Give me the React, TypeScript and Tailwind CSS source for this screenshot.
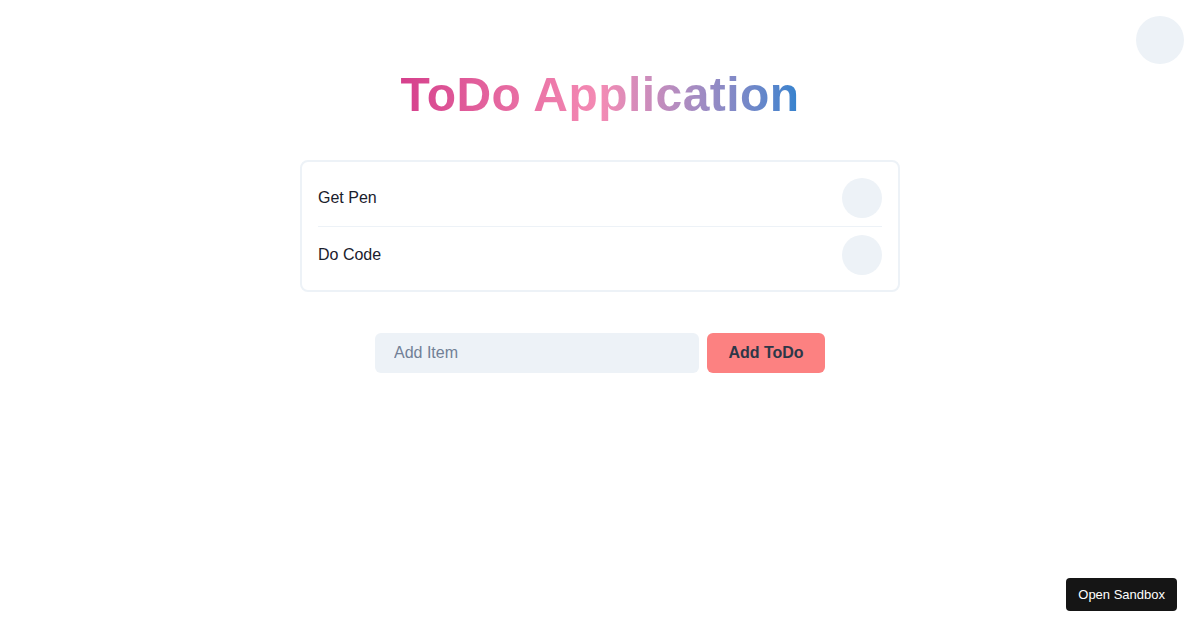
import { Fragment, useState, type FC } from "react";

type Todo = { id: number; body: string };

const initialTodos: Todo[] = [
  { id: 1, body: "Get Pen" },
  { id: 2, body: "Do Code" },
];

const TodoList: FC<{ todos: Todo[]; onDelete: (id: number) => void }> = ({ todos, onDelete }) => (
  <div className="flex w-[600px] flex-col rounded-lg border-2 border-[#edf2f7] px-4 pt-2 pb-[7px]">
    {todos.map((todo, i) => (
      <Fragment key={todo.id}>
        {i > 0 && <div className="h-px bg-[#edf2f7]" />}
        <div className="flex h-14 items-center justify-between">
          <p className="text-base text-[#1a202c]">{todo.body}</p>
          <button
            aria-label="Delete"
            onClick={() => onDelete(todo.id)}
            className="h-10 w-10 rounded-full bg-[#edf2f7]"
          />
        </div>
      </Fragment>
    ))}
  </div>
);

export default function App() {
  const [todos, setTodos] = useState<Todo[]>(initialTodos);
  const [value, setValue] = useState("");

  const addTodo = () => {
    if (!value.trim()) return;
    setTodos((t) => [...t, { id: Date.now(), body: value }]);
    setValue("");
  };

  return (
    <div className="flex min-h-screen flex-col items-center bg-white p-4 font-['Liberation_Sans',Arial,sans-serif]">
      <button aria-label="Toggle color mode" className="h-12 w-12 self-end rounded-full bg-[#edf2f7]" />

      <h1 className="mt-0.5 bg-gradient-to-r from-[#d53f8c] via-[#f48bb4] to-[#3182ce] bg-clip-text text-5xl leading-[1.2] font-extrabold tracking-[0.45px] text-transparent">
        ToDo Application
      </h1>

      <div className="mt-9">
        <TodoList todos={todos} onDelete={(id) => setTodos((t) => t.filter((x) => x.id !== id))} />
      </div>

      <form
        className="mt-[41px] flex gap-2"
        onSubmit={(e) => {
          e.preventDefault();
          addTodo();
        }}
      >
        <input
          value={value}
          onChange={(e) => setValue(e.target.value)}
          placeholder="Add Item"
          className="h-10 w-[324px] rounded-md border border-transparent bg-[#edf2f7] px-[18px] pt-px text-base text-[#1a202c] outline-none placeholder:text-[#718096]"
        />
        <button type="submit" className="h-10 w-[118px] rounded-md bg-[#fc8181] pt-px text-base font-bold text-[#2d3748]">
          Add ToDo
        </button>
      </form>

      <button className="fixed right-[23px] bottom-[19px] h-[33px] rounded bg-[#151515] px-3 text-[13px] text-white">
        Open Sandbox
      </button>
    </div>
  );
}
